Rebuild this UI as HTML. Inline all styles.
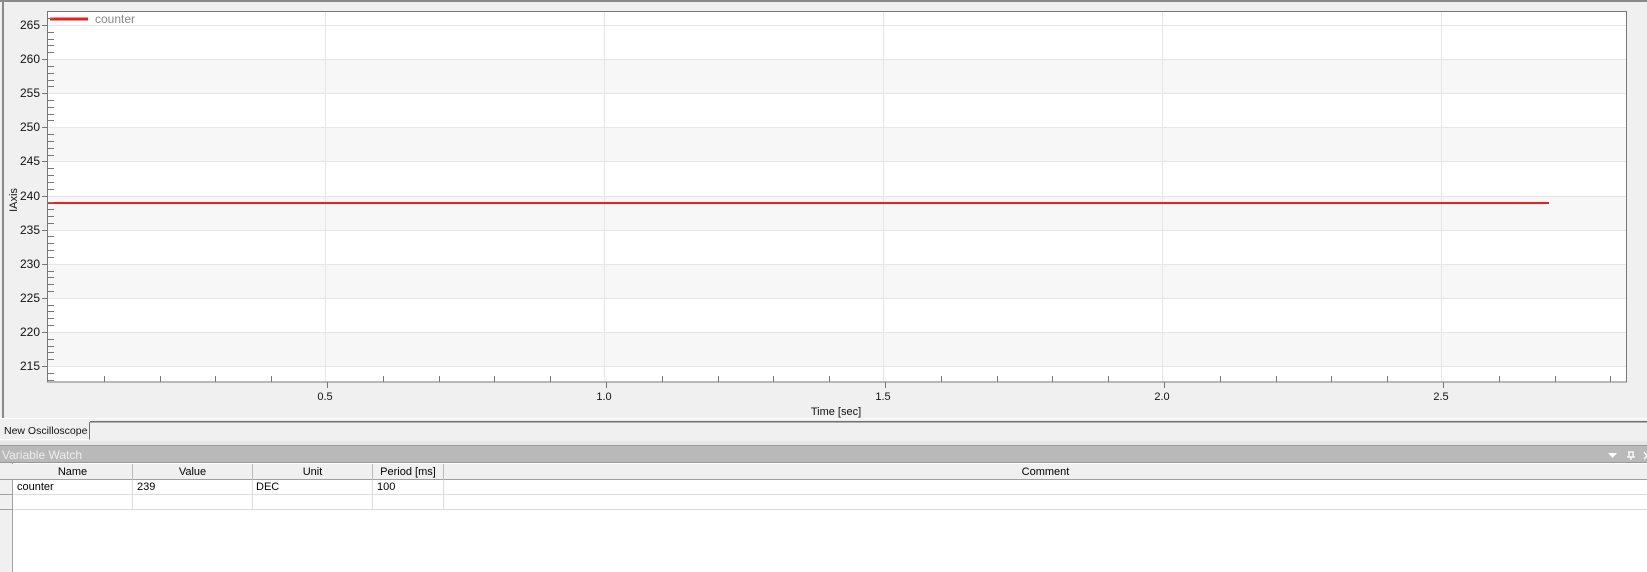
<!DOCTYPE html>
<html><head><meta charset="utf-8"><style>
body{margin:0;width:1647px;height:572px;overflow:hidden;background:#f0f0f0;font-family:"Liberation Sans",sans-serif;font-size:11px;position:relative}
.a{position:absolute;white-space:nowrap}
</style></head><body>
<svg class="a" style="left:0;top:0" width="1647" height="445" font-family="Liberation Sans, sans-serif" font-size="11">
<rect x="0" y="0" width="1647" height="445" fill="#f0f0f0"/>
<rect x="0" y="0" width="1647" height="2" fill="#8a8a8a"/>
<rect x="2" y="2" width="2" height="417" fill="#8a8a8a"/>
<rect x="0" y="418" width="1647" height="1" fill="#ffffff"/>
<rect x="90" y="421" width="1557" height="1.5" fill="#707070"/>
<rect x="48" y="12" width="1579" height="370" fill="#fff"/>
<g fill="#f7f7f7">
<rect x="48" y="59" width="1579" height="34"/>
<rect x="48" y="127" width="1579" height="34"/>
<rect x="48" y="196" width="1579" height="34"/>
<rect x="48" y="264" width="1579" height="34"/>
<rect x="48" y="332" width="1579" height="34"/>
</g>
<g stroke="#e6e6e6" stroke-width="1">
<line x1="48" y1="25.5" x2="1627" y2="25.5"/><line x1="48" y1="59.5" x2="1627" y2="59.5"/><line x1="48" y1="93.5" x2="1627" y2="93.5"/><line x1="48" y1="127.5" x2="1627" y2="127.5"/><line x1="48" y1="161.5" x2="1627" y2="161.5"/><line x1="48" y1="196.5" x2="1627" y2="196.5"/><line x1="48" y1="230.5" x2="1627" y2="230.5"/><line x1="48" y1="264.5" x2="1627" y2="264.5"/><line x1="48" y1="298.5" x2="1627" y2="298.5"/><line x1="48" y1="332.5" x2="1627" y2="332.5"/><line x1="48" y1="366.5" x2="1627" y2="366.5"/>
<line x1="325.5" y1="12" x2="325.5" y2="382"/><line x1="604.5" y1="12" x2="604.5" y2="382"/><line x1="883.5" y1="12" x2="883.5" y2="382"/><line x1="1162.5" y1="12" x2="1162.5" y2="382"/><line x1="1441.5" y1="12" x2="1441.5" y2="382"/>
</g>
<rect x="47.5" y="11.5" width="1579" height="370.5" fill="none" stroke="#777" stroke-width="1"/>
<line x1="48" y1="203" x2="1549" y2="203" stroke="#e8201e" stroke-width="2"/>
<line x1="50" y1="19" x2="88" y2="19" stroke="#e8201e" stroke-width="3"/>
<text x="95" y="23" fill="#888" font-size="12">counter</text>
<g id="yt" stroke="#777" stroke-width="1"></g>
<g id="xt" stroke="#777" stroke-width="1"></g>
<g font-size="12" fill="#111" text-anchor="end">
<text x="40" y="29">265</text><text x="40" y="63">260</text><text x="40" y="97">255</text><text x="40" y="131">250</text><text x="40" y="165">245</text><text x="40" y="200">240</text><text x="40" y="234">235</text><text x="40" y="268">230</text><text x="40" y="302">225</text><text x="40" y="336">220</text><text x="40" y="370">215</text>
</g>
<g font-size="11" fill="#111" text-anchor="middle">
<text x="325" y="400">0.5</text><text x="604" y="400">1.0</text><text x="883" y="400">1.5</text><text x="1162" y="400">2.0</text><text x="1441" y="400">2.5</text>
<text x="836" y="415">Time [sec]</text>
<text transform="translate(17,200) rotate(-90)">IAxis</text>
</g>
</svg>
<div class="a" style="left:0;top:422px;width:90px;height:18px;background:#f0f0f0;border-right:1px solid #707070;border-bottom:1px solid #fff;font-size:10.5px;line-height:18px;padding-left:4px;box-sizing:border-box;color:#111;overflow:hidden">New Oscilloscope</div>
<div class="a" style="left:0;top:441px;width:1647px;height:4px;background:#e6e6e6"></div>
<div class="a" style="left:0;top:445px;width:1647px;height:18px;background:#b9b9b9;border-top:1px solid #9a9a9a;border-bottom:1px solid #9a9a9a;color:#eee;font-size:12px;line-height:18px;padding-left:2px;box-sizing:border-box">Variable Watch
<svg class="a" style="left:1608px;top:5px" width="39" height="10"><path d="M0 2 L9 2 L4.5 7Z" fill="#fff"/><path d="M20 1 H26 M21 1 V6 M25 1 V6 M19 6 H27 M23 6 V9" stroke="#fff" stroke-width="1.3" fill="none"/><path d="M36 1 L39 5 M36 8 L39 5" stroke="#fff" stroke-width="1.3"/></svg></div>
<div class="a" style="left:0;top:463px;width:1647px;height:109px;background:#fff"></div>
<div class="a" style="left:0;top:463px;width:13px;height:109px;background:#f0f0f0;border-right:1px solid #a0a0a0;box-sizing:border-box"></div>
<div class="a" style="left:0;top:464px;width:1647px;height:16px;background:#f0f0f0;border-bottom:1px solid #a0a0a0;box-sizing:border-box"></div>
<div class="a" style="left:0;top:480px;width:1647px;height:15px;border-bottom:1px solid #ddd;box-sizing:border-box"></div>
<div class="a" style="left:0;top:495px;width:1647px;height:15px;border-bottom:1px solid #ddd;box-sizing:border-box"></div>
<div class="a" style="left:0;top:480px;width:13px;height:30px;border-right:1px solid #a0a0a0;box-sizing:border-box;background:#f0f0f0"></div>
<div class="a" style="left:0;top:494px;width:13px;height:1px;background:#a0a0a0"></div>
<div class="a" style="left:0;top:509px;width:13px;height:1px;background:#a0a0a0"></div>
<div class="a" style="left:132px;top:464px;width:1px;height:46px;background:#ddd"></div>
<div class="a" style="left:252px;top:464px;width:1px;height:46px;background:#ddd"></div>
<div class="a" style="left:372px;top:464px;width:1px;height:46px;background:#ddd"></div>
<div class="a" style="left:443px;top:464px;width:1px;height:46px;background:#ddd"></div>
<div class="a" style="left:132px;top:464px;width:1px;height:16px;background:#bbb"></div>
<div class="a" style="left:252px;top:464px;width:1px;height:16px;background:#bbb"></div>
<div class="a" style="left:372px;top:464px;width:1px;height:16px;background:#bbb"></div>
<div class="a" style="left:443px;top:464px;width:1px;height:16px;background:#bbb"></div>
<div class="a" style="top:465px;left:13px;width:119px;text-align:center;line-height:15px">Name</div>
<div class="a" style="top:465px;left:133px;width:119px;text-align:center;line-height:15px">Value</div>
<div class="a" style="top:465px;left:253px;width:119px;text-align:center;line-height:15px">Unit</div>
<div class="a" style="top:465px;left:373px;width:70px;text-align:center;line-height:15px">Period [ms]</div>
<div class="a" style="top:465px;left:444px;width:1203px;text-align:center;line-height:15px">Comment</div>
<div class="a" style="top:480px;left:17px;line-height:14px">counter</div>
<div class="a" style="top:480px;left:137px;line-height:14px">239</div>
<div class="a" style="top:480px;left:256px;line-height:14px">DEC</div>
<div class="a" style="top:480px;left:377px;line-height:14px">100</div>
<script>
var ns="http://www.w3.org/2000/svg",yt=document.getElementById('yt'),xt=document.getElementById('xt');
function L(g,a,b,c,d){var l=document.createElementNS(ns,'line');l.setAttribute('x1',a);l.setAttribute('y1',b);l.setAttribute('x2',c);l.setAttribute('y2',d);g.appendChild(l);}
for(var v=266;v>=213;v--){var y=Math.round(25+(265-v)*6.82)+0.5;if(y<12||y>382)continue;if(v%5==0)L(yt,42,y,48,y);else L(yt,48,y,54,y);}
for(var i=1;i<=28;i++){var x=Math.round(48+i*55.8)+0.5;if(x>1627)break;if(i%5==0)L(xt,x,382,x,388);else L(xt,x,376,x,382);}
</script>
</body></html>
